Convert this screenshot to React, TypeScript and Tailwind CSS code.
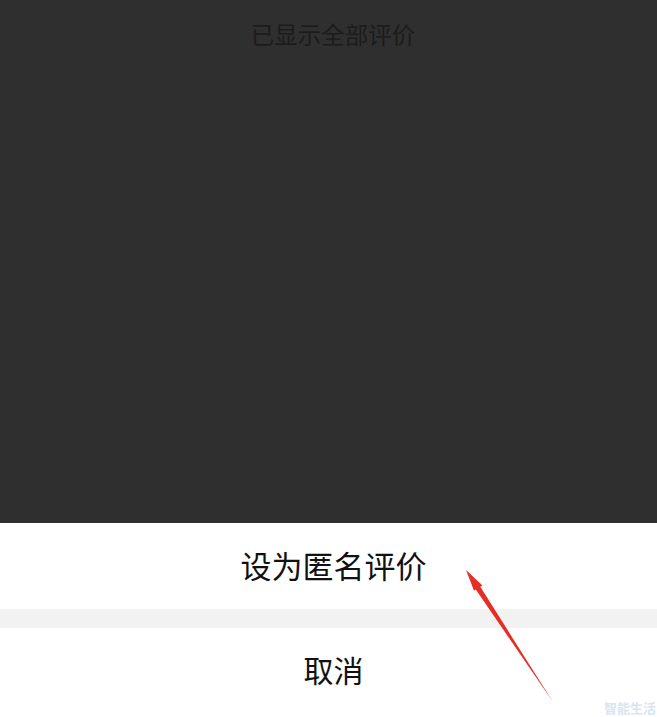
import React from "react";

const cjk = {
  fontFamily: '"Noto Sans CJK SC", "Noto Sans", sans-serif',
};

export default function App() {
  return (
    <div
      className="relative flex h-[717px] w-[657px] flex-col overflow-hidden bg-white"
      style={cjk}
    >
      {/* dimmed page behind the sheet */}
      <div className="flex h-[523px] shrink-0 flex-col items-center bg-[#2f2f2f] pl-[9px] pt-[18px]">
        <span className="text-[23.5px] leading-[32px] text-[#1c1c1c]">已显示全部评价</span>
      </div>

      {/* action sheet */}
      <div className="flex h-[86px] shrink-0 items-center justify-center bg-white pl-[10px]">
        <span className="pb-[2px] text-[31px] leading-[40px] text-[#111]">设为匿名评价</span>
      </div>
      <div className="h-[19px] shrink-0 bg-[#f2f2f2]" />
      <div className="flex flex-1 items-center justify-center bg-white pl-[10px]">
        <span className="pb-[8px] text-[30px] leading-[40px] text-[#111]">取消</span>
      </div>

      {/* annotation arrow */}
      <svg
        className="pointer-events-none absolute left-0 top-0"
        width="657"
        height="717"
        viewBox="0 0 657 717"
      >
        <polygon
          points="466,570 482.5,585.5 480.3,586.8 553,702 475.8,589.6 474,590.8"
          fill="#e52e26"
        />
      </svg>

      {/* faint watermark */}
      <span className="absolute bottom-0 right-[1px] text-[13px] font-bold leading-[18px] text-[#cfe0ec] opacity-80">
        智能生活
      </span>
    </div>
  );
}
